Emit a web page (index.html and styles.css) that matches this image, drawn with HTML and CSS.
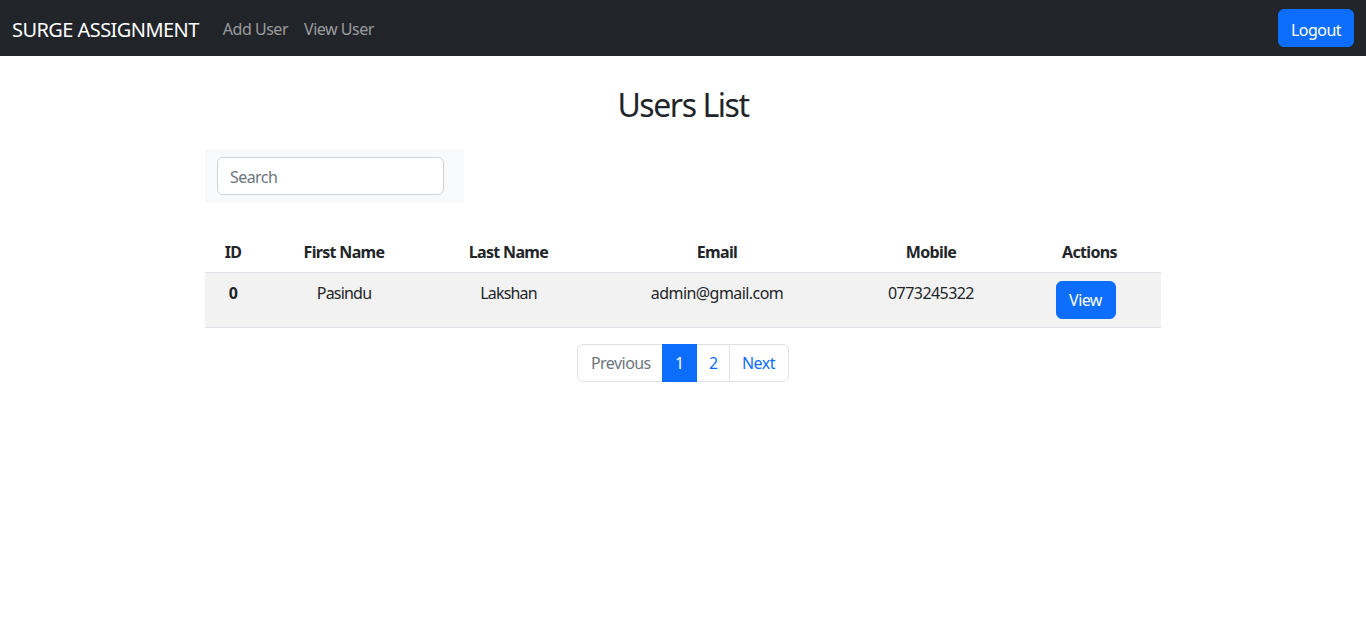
FILE: index.html
```html
<!DOCTYPE html>
<html lang="en">
    <head>
        <meta charset="utf-8">
        <title>Users List</title>
        <link rel="stylesheet" href="styles.css">
    </head>
    <body>
        <nav class="navbar">
            <a class="brand" href="#">SURGE ASSIGNMENT</a>
            <a class="nav-link" href="#">Add User</a>
            <a class="nav-link" href="#">View User</a>
            <button class="btn logout" type="button">Logout</button>
        </nav>

        <main class="wrap">
            <h2 class="title">Users List</h2>

            <div class="search-box">
                <input class="search" type="text" placeholder="Search">
            </div>

            <table class="users">
                <colgroup>
                    <col class="c-id">
                    <col class="c-first">
                    <col class="c-last">
                    <col class="c-email">
                    <col class="c-mobile">
                    <col class="c-actions">
                </colgroup>
                <thead>
                    <tr>
                        <th>ID</th>
                        <th>First Name</th>
                        <th>Last Name</th>
                        <th>Email</th>
                        <th>Mobile</th>
                        <th>Actions</th>
                    </tr>
                </thead>
                <tbody>
                    <tr>
                        <th>0</th>
                        <td class="name">Pasindu</td>
                        <td class="name">Lakshan</td>
                        <td>admin@gmail.com</td>
                        <td>0773245322</td>
                        <td><button class="btn view" type="button">View</button></td>
                    </tr>
                </tbody>
            </table>

            <ul class="pagination">
                <li><a class="page off" href="#">Previous</a></li>
                <li><a class="page on" href="#">1</a></li>
                <li><a class="page two" href="#">2</a></li>
                <li><a class="page last" href="#">Next</a></li>
            </ul>
        </main>
    </body>
</html>
```

FILE: styles.css
```css
* {
    box-sizing: border-box;
}

body {
    margin: 0;
    font-family: "Noto Sans", "Open Sans", sans-serif;
    font-size: 16px;
    line-height: 24px;
    letter-spacing: -0.035em;
    color: #212529;
    background: #fff;
}

a {
    text-decoration: none;
}

/* top bar */
.navbar {
    display: flex;
    align-items: center;
    height: 56px;
    padding: 0 12px;
    background: #212529;
}

.brand {
    margin-right: 16px;
    padding-top: 4px;
    font-size: 20px;
    line-height: 30px;
    color: #fff;
}

.nav-link {
    padding: 2px 8px 0;
    letter-spacing: -0.03em;
    color: rgba(255, 255, 255, .55);
}

.btn {
    height: 38px;
    padding: 6px 12px;
    border: 1px solid #0d6efd;
    border-radius: 6px;
    font: inherit;
    letter-spacing: inherit;
    color: #fff;
    background: #0d6efd;
}

.logout {
    width: 76px;
    margin-left: auto;
    padding: 8px 12px 6px;
}

/* page body */
.wrap {
    width: 956px;
    margin: 0 auto;
}

.title {
    margin: 30px 0 25px;
    font-size: 32px;
    font-weight: 400;
    line-height: 38px;
    letter-spacing: -0.045em;
    text-align: center;
}

.search-box {
    width: 259px;
    height: 54px;
    padding: 8px 20px 8px 12px;
    background: #f8f9fa;
}

.search {
    display: block;
    width: 227px;
    height: 38px;
    padding: 8px 12px 6px;
    border: 1px solid #ced4da;
    border-radius: 6px;
    font: inherit;
    letter-spacing: inherit;
    color: #212529;
    background: #fff;
}

.search::placeholder {
    color: #6c757d;
    opacity: 1;
}

/* table */
.users {
    width: 100%;
    margin: 29px 0 16px;
    border-collapse: collapse;
    table-layout: fixed;
    text-align: center;
}

.users th,
.users td {
    padding: 8px;
    vertical-align: top;
    border-bottom: 1px solid #dee2e6;
}

.users thead th {
    vertical-align: bottom;
    letter-spacing: -0.042em;
}

.users tbody tr {
    background: #f2f2f2;
}

.users .name {
    letter-spacing: -0.05em;
}

.c-id {
    width: 56px;
}

.c-first {
    width: 166px;
}

.c-last {
    width: 163px;
}

.c-email {
    width: 254px;
}

.c-mobile {
    width: 174px;
}

.c-actions {
    width: 143px;
}

.view {
    width: 60px;
    margin-right: 8px;
}

/* pagination */
.pagination {
    display: flex;
    justify-content: center;
    margin: 0;
    padding: 0;
    list-style: none;
}

.page {
    display: block;
    margin-left: -1px;
    padding: 6px 12px;
    border: 1px solid #dee2e6;
    color: #0d6efd;
    background: #fff;
}

.pagination li:first-child .page {
    width: 86px;
    margin-left: 0;
    padding-left: 13px;
    border-radius: 6px 0 0 6px;
}

.pagination li:last-child .page {
    width: 60px;
    border-radius: 0 6px 6px 0;
}

.page.two {
    width: 34px;
}

.page.off {
    color: #6c757d;
}

.page.on {
    position: relative;
    width: 35px;
    border-color: #0d6efd;
    color: #fff;
    background: #0d6efd;
}
```
